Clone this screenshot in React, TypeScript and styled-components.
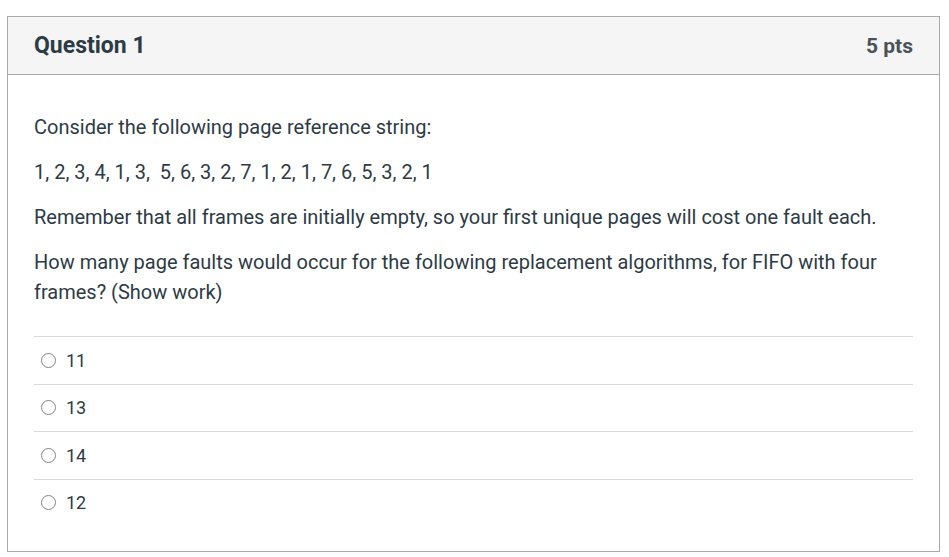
import styled, { createGlobalStyle } from 'styled-components';

const GlobalStyle = createGlobalStyle`
  body {
    margin: 0;
    background: #fff;
    font-family: Roboto, "Liberation Sans", sans-serif;
    color: #2d3b45;
  }
`;

const answers = ['11', '13', '14', '12'];

const App = () => {
  return (
    <Page>
      <GlobalStyle />
      <Card>
        <Header>
          <Title>Question 1</Title>
          <Points>5 pts</Points>
        </Header>
        <Body>
          <Para>Consider the following page reference string:</Para>
          <Para>1, 2, 3, 4, 1, 3,&nbsp; 5, 6, 3, 2, 7, 1, 2, 1, 7, 6, 5, 3, 2, 1</Para>
          <Para>
            Remember that all frames are initially empty, so your first unique pages will cost one
            fault each.
          </Para>
          <Para>
            How many page faults would occur for the following replacement algorithms, for FIFO with
            four frames? (Show work)
          </Para>
          <AnswerList>
            {answers.map((a) => (
              <Answer key={a}>
                <Radio />
                <AnswerText>{a}</AnswerText>
              </Answer>
            ))}
          </AnswerList>
        </Body>
      </Card>
    </Page>
  );
};

export default App;

const Page = styled.div`
  padding: 16px 9px 6px 7px;
`;

const Card = styled.div`
  border: 1px solid #a9a9a9;
`;

const Header = styled.div`
  display: flex;
  justify-content: space-between;
  align-items: center;
  height: 57px;
  padding: 0 26px;
  background: #f5f5f5;
  border-bottom: 1px solid #a9a9a9;
`;

const Title = styled.h2`
  margin: 0;
  font-size: 23px;
  font-weight: 700;
`;

const Points = styled.div`
  font-size: 21px;
  font-weight: 700;
  color: #4a5259;
`;

const Body = styled.div`
  padding: 37px 26px 25px 26px;
`;

const Para = styled.p`
  margin: 0 0 15px 0;
  font-size: 20px;
  line-height: 30px;
`;

const AnswerList = styled.div`
  margin-top: 29px;
`;

const Answer = styled.div`
  display: flex;
  align-items: center;
  gap: 10px;
  height: 46.5px;
  padding-left: 7px;
  border-top: 1px solid #dadada;
`;

const Radio = styled.span`
  width: 15px;
  height: 15px;
  border: 1px solid #858585;
  border-radius: 50%;
  box-sizing: border-box;
`;

const AnswerText = styled.span`
  font-size: 18px;
`;
